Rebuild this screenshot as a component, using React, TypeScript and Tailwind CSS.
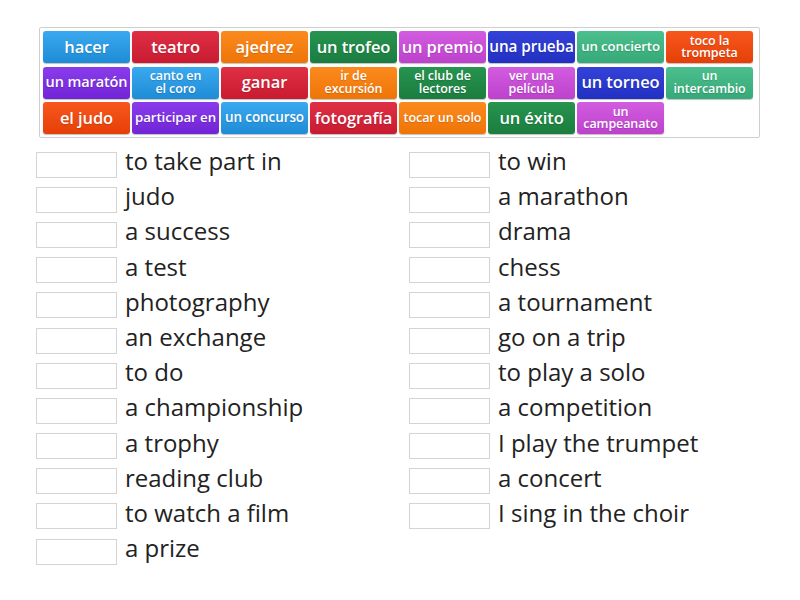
import React from "react";

// ── Tile colours ─────────────────────────────────────────────────────────────

const TILE_BG: Record<string, string> = {
  blue:      "bg-gradient-to-b from-[#3aa9ef] to-[#1e8bd6]",
  red:       "bg-gradient-to-b from-[#df2f45] to-[#c81a30]",
  orange:    "bg-gradient-to-b from-[#fb8a1c] to-[#ef7406]",
  green:     "bg-gradient-to-b from-[#27944f] to-[#1a7d3f]",
  magenta:   "bg-gradient-to-b from-[#d25ce0] to-[#bd41cc]",
  darkblue:  "bg-gradient-to-b from-[#3442d8] to-[#2230c2]",
  teal:      "bg-gradient-to-b from-[#4cbf8e] to-[#35a977]",
  orangered: "bg-gradient-to-b from-[#f7571c] to-[#e53f07]",
  purple:    "bg-gradient-to-b from-[#8a3ceb] to-[#7124d6]",
};

interface Tile {
  text:   string;
  color:  string;
  size:   string;
  lines?: string[];
}

const TILES: Tile[] = [
  { text: "hacer",            color: "blue",      size: "text-[16.5px]" },
  { text: "teatro",           color: "red",       size: "text-[16.5px]" },
  { text: "ajedrez",          color: "orange",    size: "text-[16.5px]" },
  { text: "un trofeo",        color: "green",     size: "text-[16.5px]" },
  { text: "un premio",        color: "magenta",   size: "text-[16.5px]" },
  { text: "una prueba",       color: "darkblue",  size: "text-[15.3px]" },
  { text: "un concierto",     color: "teal",      size: "text-[13.2px]" },
  { text: "toco la trompeta", color: "orangered", size: "text-[12.5px]", lines: ["toco la", "trompeta"] },

  { text: "un maratón",       color: "purple",    size: "text-[14.5px]" },
  { text: "canto en el coro", color: "blue",      size: "text-[12.5px]", lines: ["canto en", "el coro"] },
  { text: "ganar",            color: "red",       size: "text-[16.5px]" },
  { text: "ir de excursión",  color: "orange",    size: "text-[12.5px]", lines: ["ir de", "excursión"] },
  { text: "el club de lectores", color: "green",  size: "text-[12.5px]", lines: ["el club de", "lectores"] },
  { text: "ver una película", color: "magenta",   size: "text-[12.5px]", lines: ["ver una", "película"] },
  { text: "un torneo",        color: "darkblue",  size: "text-[16.5px]" },
  { text: "un intercambio",   color: "teal",      size: "text-[12.5px]", lines: ["un", "intercambio"] },

  { text: "el judo",          color: "orangered", size: "text-[16.5px]" },
  { text: "participar en",    color: "purple",    size: "text-[13.3px]" },
  { text: "un concurso",      color: "blue",      size: "text-[13.5px]" },
  { text: "fotografía",       color: "red",       size: "text-[16.5px]" },
  { text: "tocar un solo",    color: "orange",    size: "text-[12.6px]" },
  { text: "un éxito",         color: "green",     size: "text-[16.5px]" },
  { text: "un campeanato",    color: "magenta",   size: "text-[12.5px]", lines: ["un", "campeanato"] },
];

const LEFT = [
  "to take part in", "judo", "a success", "a test", "photography", "an exchange",
  "to do", "a championship", "a trophy", "reading club", "to watch a film", "a prize",
];

const RIGHT = [
  "to win", "a marathon", "drama", "chess", "a tournament", "go on a trip",
  "to play a solo", "a competition", "I play the trumpet", "a concert", "I sing in the choir",
];

function TileBox({ tile }: { tile: Tile }) {
  const parts = tile.lines ?? [tile.text];
  return (
    <div
      className={`w-[87px] h-[32px] rounded-[3px] flex flex-col items-center justify-center text-white font-semibold whitespace-nowrap tracking-[-0.1px] shadow-[0_1px_1px_rgba(0,0,0,0.25)] [text-shadow:0_1px_1px_rgba(0,0,0,0.15)] ${TILE_BG[tile.color]} ${tile.size} ${tile.lines ? "leading-[12.5px]" : "leading-none"}`}
    >
      {parts.map((l) => (
        <span key={l}>{l}</span>
      ))}
    </div>
  );
}

function Row({ text }: { text: string }) {
  return (
    <div className="h-[35.2px] flex items-center">
      <div className="w-[81px] h-[26px] border border-[#d4d4d4] bg-white shrink-0" />
      <span className="ml-[8px] pb-[7px] text-[24px] text-[#222] leading-none whitespace-nowrap">{text}</span>
    </div>
  );
}

export default function App() {
  return (
    <div className="w-[800px] h-[600px] bg-white overflow-hidden font-['Open_Sans',sans-serif]">
      <div className="ml-[39px] mt-[27px] w-[721px] h-[111px] border border-[#cfcfcf] rounded-[2px] pt-[3px] pl-[3px] flex flex-wrap content-start gap-x-[2px] gap-y-[3.5px]">
        {TILES.map((t) => (
          <TileBox key={t.text} tile={t} />
        ))}
      </div>

      <div className="ml-[36px] mt-[9px] flex">
        <div className="w-[373px]">
          {LEFT.map((t) => (
            <Row key={t} text={t} />
          ))}
        </div>
        <div>
          {RIGHT.map((t) => (
            <Row key={t} text={t} />
          ))}
        </div>
      </div>
    </div>
  );
}
